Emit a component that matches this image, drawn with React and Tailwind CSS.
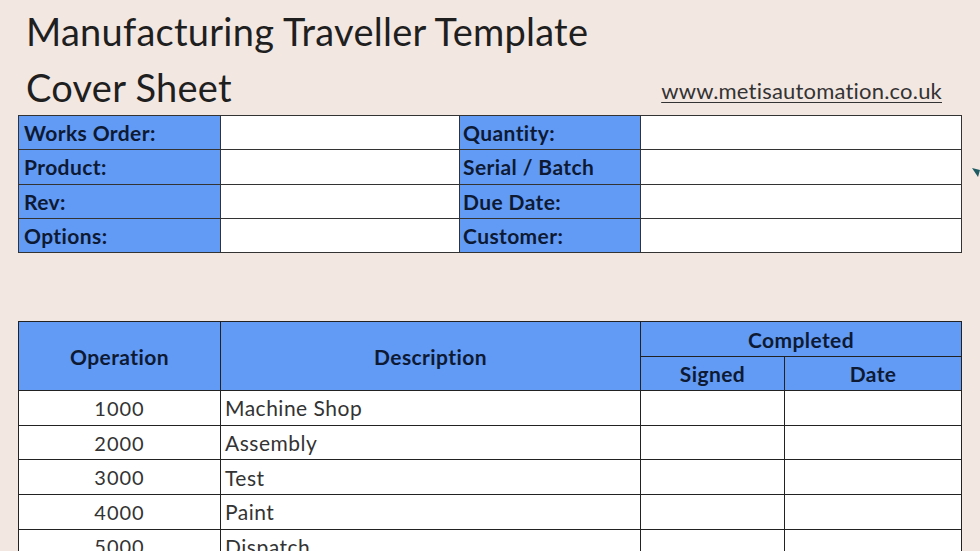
import React from "react";

const info = [
  ["Works Order:", "Quantity:"],
  ["Product:", "Serial / Batch"],
  ["Rev:", "Due Date:"],
  ["Options:", "Customer:"],
];

const ops = [
  ["1000", "Machine Shop"],
  ["2000", "Assembly"],
  ["3000", "Test"],
  ["4000", "Paint"],
  ["5000", "Dispatch"],
];

function App() {
  return (
    <div
      className="relative w-[980px] h-[551px] overflow-hidden bg-[#f3e7e2] text-[#222]"
      style={{ fontFamily: "Lato, 'Open Sans', sans-serif" }}
    >
      <div className="pl-[26px] pt-[9px] pr-[38px]">
        <h1 className="text-[38px] leading-[44px] tracking-[0.25px] text-[#1f1f1f]">
          Manufacturing Traveller Template
        </h1>
        <div className="flex items-end justify-between mt-[12px]">
          <h2 className="text-[38px] leading-[44px] tracking-[0.25px] text-[#1f1f1f]">Cover Sheet</h2>
          <a className="text-[22px] leading-[26px] mb-[5px] tracking-[0.2px] text-[#333] underline underline-offset-[3px] decoration-1">
            www.metisautomation.co.uk
          </a>
        </div>
      </div>

      <table className="ml-[18px] mt-[6px] w-[943px] table-fixed border-collapse">
        <colgroup>
          <col className="w-[202px]" />
          <col className="w-[239px]" />
          <col className="w-[181px]" />
          <col className="w-[321px]" />
        </colgroup>
        <tbody>
          {info.map(([a, b]) => (
            <tr key={a} className="h-[34.3px]">
              <td className="border border-[#333] bg-[#629bf6] px-[5px] text-[21px] tracking-[0.4px] font-bold text-[#0e1a33] leading-none">
                {a}
              </td>
              <td className="border border-[#333] bg-white"></td>
              <td className="border border-[#333] bg-[#629bf6] px-[3px] text-[21px] tracking-[0.4px] font-bold text-[#0e1a33] leading-none">
                {b}
              </td>
              <td className="border border-[#333] bg-white"></td>
            </tr>
          ))}
        </tbody>
      </table>

      <table className="ml-[18px] mt-[68px] w-[943px] table-fixed border-collapse">
        <colgroup>
          <col className="w-[202px]" />
          <col className="w-[420px]" />
          <col className="w-[144px]" />
          <col className="w-[177px]" />
        </colgroup>
        <thead className="bg-[#629bf6] text-[21px] tracking-[0.4px] font-bold text-[#0e1a33] leading-none">
          <tr className="h-[35px]">
            <th rowSpan={2} className="border border-[#222]">Operation</th>
            <th rowSpan={2} className="border border-[#222]">Description</th>
            <th colSpan={2} className="border border-[#222]">Completed</th>
          </tr>
          <tr className="h-[34px]">
            <th className="border border-[#222]">Signed</th>
            <th className="border border-[#222]">Date</th>
          </tr>
        </thead>
        <tbody className="bg-white text-[21px] tracking-[0.5px] text-[#333] leading-none">
          {ops.map(([n, d]) => (
            <tr key={n} className="h-[34.6px]">
              <td className="border border-[#222] text-center text-[20px] tracking-[1px]">{n}</td>
              <td className="border border-[#222] px-[4px]">{d}</td>
              <td className="border border-[#222]"></td>
              <td className="border border-[#222]"></td>
            </tr>
          ))}
        </tbody>
      </table>

      <svg
        className="absolute left-[970px] top-[166px]"
        width="10"
        height="12"
        viewBox="0 0 10 12"
      >
        <polygon points="2,2 10,4 8,11" fill="#1d5c63" />
      </svg>
    </div>
  );
}

export default App;
